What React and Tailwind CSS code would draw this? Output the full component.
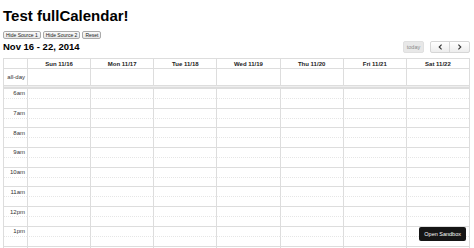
import React from "react";

const days = ["Sun 11/16", "Mon 11/17", "Tue 11/18", "Wed 11/19", "Thu 11/20", "Fri 11/21", "Sat 11/22"];
const hours = ["6am", "7am", "8am", "9am", "10am", "11am", "12pm", "1pm", ""];

const cols = "grid grid-cols-[23px_repeat(7,1fr)]";

export default function App() {
  return (
    <div className="relative h-[248px] w-[474px] overflow-hidden bg-white font-['Liberation_Sans',Arial,sans-serif] text-black">
      <div className="px-[3px]">
        <h1 className="pt-[8px] text-[15px] font-bold leading-[15px]">Test fullCalendar!</h1>

        <div className="mt-[8px] flex gap-[2px]">
          {["Hide Source 1", "Hide Source 2", "Reset"].map((b) => (
            <button
              key={b}
              className="h-[8px] rounded-[2px] border border-[#aaa] bg-gradient-to-b from-[#fafafa] to-[#e8e8e8] px-[2px] text-[5px] leading-[6px] text-[#222]"
            >
              {b}
            </button>
          ))}
        </div>

        <div className="mt-[2px] flex items-start justify-between pr-[1px]">
          <h2 className="text-[9.5px] font-bold leading-[11px]">Nov 16 - 22, 2014</h2>
          <div className="flex items-center gap-[6px]">
            <button className="h-[12px] w-[21px] rounded-[2px] border border-[#e0e0e0] bg-[#e8e8e8] text-[5.5px] text-[#888]">
              today
            </button>
            <div className="flex h-[12px] rounded-[2px] border border-[#d6d6d6] bg-gradient-to-b from-white to-[#ededed]">
              <button className="flex w-[19px] items-center justify-center border-r border-[#d6d6d6] text-[#333]">
                <svg width="5" height="6" viewBox="0 0 5 6" fill="none" stroke="currentColor" strokeWidth="1.1">
                  <path d="M3.6 0.6 L1.2 3 L3.6 5.4" />
                </svg>
              </button>
              <button className="flex w-[19px] items-center justify-center text-[#333]">
                <svg width="5" height="6" viewBox="0 0 5 6" fill="none" stroke="currentColor" strokeWidth="1.1">
                  <path d="M1.4 0.6 L3.8 3 L1.4 5.4" />
                </svg>
              </button>
            </div>
          </div>
        </div>

        <div className="mt-[5px] w-[467px] border-x border-[#ddd]">
          <div className={`${cols} h-[10px] border-t border-[#ddd]`}>
            <div />
            {days.map((d) => (
              <div
                key={d}
                className="flex items-center justify-center border-l border-[#ddd] text-[6px] font-bold leading-none text-[#222]"
              >
                {d}
              </div>
            ))}
          </div>
          <div className={`${cols} h-[17px]`}>
            <div className="flex items-center justify-end border-t border-[#ddd] pr-[2px] text-[6px] leading-none text-[#333]">
              all-day
            </div>
            {days.map((d) => (
              <div key={d} className="border-l border-t border-[#ddd]" />
            ))}
          </div>
          <div className="h-[3px] border-y border-[#ddd] bg-[#eee]" />
          {hours.map((h, i) => (
            <React.Fragment key={i}>
              <div className={`${cols} h-[9.85px]`}>
                <div className="flex items-center justify-end border-t border-[#ddd] pr-[2px] text-[6px] leading-none text-[#333]">
                  {h}
                </div>
                {days.map((d) => (
                  <div key={d} className="border-l border-t border-[#ddd]" />
                ))}
              </div>
              <div className={`${cols} h-[9.85px]`}>
                <div className="[border-top:1px_dotted_#e6e6e6]" />
                {days.map((d) => (
                  <div key={d} className="border-l border-[#ddd] [border-top:1px_dotted_#e6e6e6]" />
                ))}
              </div>
            </React.Fragment>
          ))}
        </div>
      </div>

      <button className="absolute bottom-[7px] right-[8px] h-[14px] rounded-[2px] bg-[#151515] px-[5px] text-[5.5px] text-white">
        Open Sandbox
      </button>
    </div>
  );
}
